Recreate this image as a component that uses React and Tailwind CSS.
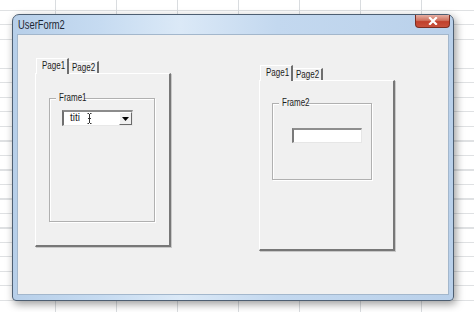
const T = ({ children, className = "" }) => (
  <span className={"inline-block origin-left scale-x-[0.8] whitespace-nowrap " + className}>{children}</span>
);

function Tabs() {
  return (
    <div className="relative z-10 flex h-[15px] items-end pl-[1px]">
      <div className="-mb-[1px] flex h-[16px] w-[33px] items-start border-l border-t border-white border-r-2 border-r-[#6e6e6e] bg-[#f0f0f0] pl-[5px] pt-[1px] text-[10px] leading-[12px] text-[#1c1c1c]">
        <T>Page1</T>
      </div>
      <div className="flex h-[12px] w-[30px] items-start border-t border-white border-r-2 border-r-[#6e6e6e] pl-[3px] pt-[0px] text-[10px] leading-[12px] text-[#1c1c1c]">
        <T>Page2</T>
      </div>
    </div>
  );
}

function Frame({ label, w, h, ml, mt, children }) {
  return (
    <div
      className="relative border border-[#b0b0b0] shadow-[inset_1px_1px_0_#ffffff,1px_1px_0_#ffffff]"
      style={{ width: w, height: h, marginLeft: ml, marginTop: mt }}
    >
      <div className="absolute left-[6px] top-[-7px] bg-[#f0f0f0] px-[3px] text-[10px] leading-[12px] text-[#1c1c1c]">
        <T className="w-[22px]">{label}</T>
      </div>
      {children}
    </div>
  );
}

function MultiPage({ ml, mt, bodyH, children }) {
  return (
    <div className="flex w-[136px] flex-col" style={{ marginLeft: ml, marginTop: mt }}>
      <Tabs />
      <div
        className="flex flex-col border-l border-t border-white border-b-2 border-r-2 border-b-[#777777] border-r-[#777777] bg-[#f0f0f0] shadow-[1px_1px_0_#c8c8c8]"
        style={{ height: bodyH }}
      >
        {children}
      </div>
    </div>
  );
}

export default function App() {
  return (
    <div className="relative h-[312px] w-[474px] overflow-hidden bg-white bg-[repeating-linear-gradient(90deg,transparent_0_55px,#d9dcdf_55px_56px,transparent_56px_61px),repeating-linear-gradient(180deg,transparent_0_10px,#dfe1e3_10px_11px,transparent_11px_14.5px)] font-['Liberation_Sans',Arial,sans-serif]">
      <div className="absolute left-[12px] top-[14px] flex h-[287px] w-[442px] flex-col rounded-t-[7px] rounded-b-[4px] border border-[#4e5f72] bg-[linear-gradient(to_right,#b7cfe9,#c6dbf1_20%,#dbe9f7_38%,#c3d8ef_60%,#bfd5ed_80%,#b9d0ea)] px-[4px] pb-[5px] shadow-[2px_3px_8px_rgba(0,0,0,0.4)]">
        <div className="relative flex h-[19px] shrink-0 items-center pl-[1px] text-[12px] text-[#1d2733]">
          <T className="scale-x-[0.78]">UserForm2</T>
          <div className="absolute right-[-1px] top-0 flex h-[13px] w-[35px] items-center justify-center rounded-b-[4px] border border-t-0 border-[#7b2d22] bg-[linear-gradient(to_bottom,#e6b0a4,#d0725f_45%,#c0402c_55%,#c8513c)]">
            <svg width="10" height="8" viewBox="0 0 10 8">
              <path d="M2 1 L8 7 M8 1 L2 7" stroke="#ffffff" strokeWidth="2.2" strokeLinecap="square" />
            </svg>
          </div>
        </div>
        <div className="flex flex-1 items-start border border-[#a3b7cc] bg-[#f0f0f0]">
          <MultiPage ml={17} mt={23} bodyH={174}>
            <Frame label="Frame1" w={106} h={124} ml={13} mt={24}>
              <div className="ml-[12px] mt-[11px] flex h-[16px] w-[71px] items-stretch border-l-2 border-t-2 border-l-[#6f6f6f] border-t-[#8c8c8c] border-b border-r border-b-[#e8e8e8] border-r-[#e8e8e8] bg-white">
                <div className="relative flex-1 pl-[6px] text-[10px] leading-[12px] text-[#1c1c1c]">
                  <span>titi</span>
                  <svg className="absolute left-[23px] top-[1px]" width="5" height="11" viewBox="0 0 5 11">
                    <path d="M0.5 0.5 H2 M3 0.5 H4.5 M2.5 1 V10 M0.5 10.5 H2 M3 10.5 H4.5 M1 5.5 H4" stroke="#333" strokeWidth="1" fill="none" />
                  </svg>
                </div>
                <div className="flex w-[13px] items-center justify-center border-l border-t border-white border-b border-r border-b-[#6a6a6a] border-r-[#6a6a6a] bg-[#f0f0f0]">
                  <svg width="7" height="4" viewBox="0 0 7 4">
                    <path d="M0 0 H7 L3.5 4 Z" fill="#000" />
                  </svg>
                </div>
              </div>
            </Frame>
          </MultiPage>
          <MultiPage ml={88} mt={30} bodyH={171}>
            <Frame label="Frame2" w={100} h={77} ml={12} mt={22}>
              <div className="ml-[19px] mt-[24px] h-[15px] w-[70px] border-l-2 border-t-2 border-l-[#7a7a7a] border-t-[#8e8e8e] border-b border-r border-b-[#e6e6e6] border-r-[#e6e6e6] bg-white" />
            </Frame>
          </MultiPage>
        </div>
      </div>
    </div>
  );
}
